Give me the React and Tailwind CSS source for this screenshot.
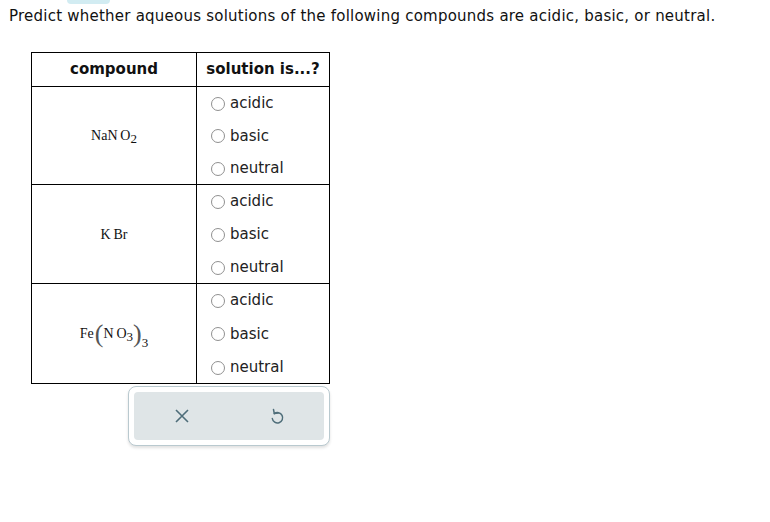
import React from "react";

const Radio = ({ label }) => (
  <label className="flex items-center h-[31px] pl-[14px] gap-[5px] text-[15px] text-[#222]">
    <span className="w-[14px] h-[14px] rounded-full border border-[#909090] bg-white" />
    <span>{label}</span>
  </label>
);

const Options = ({ h }) => (
  <div className={`flex flex-col justify-between pt-[1px] ${h}`}>
    <Radio label="acidic" />
    <Radio label="basic" />
    <Radio label="neutral" />
  </div>
);

const App = () => {
  return (
    <div className="w-[770px] h-[522px] bg-white font-['DejaVu_Sans',Verdana,sans-serif] text-[#111]">
      <div className="ml-[67px] w-[43px] h-[4px] rounded-b-lg bg-[#d2ecf2]" />
      <p className="pl-[9px] pt-[3px] text-[15px] leading-[18px] tracking-[0.23px] whitespace-nowrap">
        Predict whether aqueous solutions of the following compounds are acidic, basic, or neutral.
      </p>

      {/* Table */}
      <table className="ml-[31px] mt-[27px] border-collapse">
        <thead>
          <tr className="h-[34px]">
            <th className="w-[165px] border border-black text-[15px] font-bold">compound</th>
            <th className="w-[133px] border border-black text-[15px] font-bold">solution is...?</th>
          </tr>
        </thead>
        <tbody className="font-['Liberation_Serif',serif]">
          <tr>
            <td className="border border-black text-center text-[14px]">
              NaN&thinsp;O<sub className="text-[13px] relative top-[3px]">2</sub>
            </td>
            <td className="border border-black align-top p-0 font-['DejaVu_Sans',sans-serif]">
              <Options h="h-[97px]" />
            </td>
          </tr>
          <tr>
            <td className="border border-black text-center text-[14px]">K&thinsp;Br</td>
            <td className="border border-black align-top p-0 font-['DejaVu_Sans',sans-serif]">
              <Options h="h-[98px]" />
            </td>
          </tr>
          <tr>
            <td className="border border-black text-center text-[14px]">
              <span className="inline-flex items-center">
                Fe
                <span className="text-[26px] font-light text-[#555] leading-none ml-[1px]">(</span>
                N&thinsp;O<sub className="text-[13px] relative top-[3px]">3</sub>
                <span className="text-[26px] font-light text-[#555] leading-none">)</span>
                <sub className="text-[13px] relative top-[9px]">3</sub>
              </span>
            </td>
            <td className="border border-black align-top p-0 font-['DejaVu_Sans',sans-serif]">
              <Options h="h-[99px]" />
            </td>
          </tr>
        </tbody>
      </table>

      {/* Buttons */}
      <div className="ml-[128px] mt-[2px] w-[202px] h-[60px] rounded-lg border border-[#b9c9cf] bg-white shadow-[0_2px_3px_rgba(0,0,0,0.12)] p-[5px]">
        <div className="flex h-[48px] rounded bg-[#dfe5e7]">
          <div className="flex flex-1 items-center justify-center">
            <svg width="14" height="14" viewBox="0 0 14 14" stroke="#4e6d79" strokeWidth="1.6" fill="none">
              <path d="M1 1L13 13M13 1L1 13" />
            </svg>
          </div>
          <div className="flex flex-1 items-center justify-center">
            <svg width="14" height="18" viewBox="0 0 14 18" stroke="#4e6d79" strokeWidth="1.5" fill="none" strokeLinecap="round" strokeLinejoin="round">
              <path d="M3.5 2.5L4.3 6.6L8.2 6" />
              <path d="M4.3 6.6A5.2 5.2 0 1 1 2.3 11.5" />
            </svg>
          </div>
        </div>
      </div>
    </div>
  );
};

export default App;
